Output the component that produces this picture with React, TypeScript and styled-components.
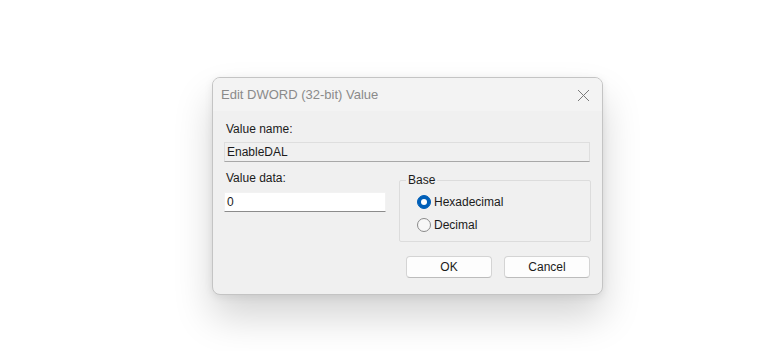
import styled, { createGlobalStyle } from 'styled-components';

const GlobalStyle = createGlobalStyle`
  html, body {
    margin: 0;
    padding: 0;
    background: #ffffff;
  }
  body {
    font-family: "Liberation Sans", Arial, sans-serif;
    color: #1b1b1b;
  }
`;

const Page = styled.div`
  width: 768px;
  height: 351px;
  padding: 77px 0 0 212px;
  box-sizing: border-box;
  overflow: hidden;
`;

const Dialog = styled.div`
  width: 391px;
  box-sizing: border-box;
  background: #f0f0f0;
  border: 1px solid #c4c4c4;
  border-radius: 8px;
  box-shadow: 0 22px 38px rgba(0, 0, 0, 0.17), 0 2px 8px rgba(0, 0, 0, 0.08);
  overflow: hidden;
`;

const TitleBar = styled.div`
  height: 33px;
  display: flex;
  align-items: center;
  justify-content: space-between;
  padding: 0 12px 0 8px;
  background: #f3f3f3;
`;

const Title = styled.span`
  font-size: 13px;
  color: #8a8a8a;
`;

const CloseIcon = styled.svg`
  width: 13px;
  height: 13px;
  margin-top: 1px;
`;

const Body = styled.div`
  padding: 0 11px 16px 11px;
`;

const Label = styled.div`
  font-size: 12px;
  line-height: 14px;
  margin: ${(p: { $top: number }) => p.$top}px 0 0 2px;
`;

const TextBox = styled.div<{ $width: number; $white?: boolean; $top: number }>`
  width: ${(p) => p.$width}px;
  height: 20px;
  margin-top: ${(p) => p.$top}px;
  box-sizing: border-box;
  background: ${(p) => (p.$white ? '#ffffff' : '#f0f0f0')};
  border: 1px solid ${(p) => (p.$white ? '#f2f2f2' : '#dedede')};
  border-bottom-color: ${(p) => (p.$white ? '#8c8c8c' : '#a8a8a8')};
  font-size: 12px;
  line-height: 18px;
  padding-left: 2px;
  display: flex;
  align-items: center;
`;

const DataRow = styled.div`
  display: grid;
  grid-template-columns: 162px 192px;
  column-gap: 13px;
  align-items: start;
`;

const DataColumn = styled.div`
  display: flex;
  flex-direction: column;
`;

const GroupBox = styled.fieldset`
  margin: 11px 0 0 0;
  padding: 8px 0 7px 6px;
  height: 69px;
  box-sizing: border-box;
  border: 1px solid #dcdcdc;
  border-radius: 2px;
  display: flex;
  flex-direction: column;
  gap: 9px;
  min-width: 0;
`;

const Legend = styled.legend`
  font-size: 12px;
  line-height: 14px;
  padding: 0 2px;
  margin-left: 0;
`;

const RadioRow = styled.div`
  display: flex;
  align-items: center;
  gap: 3px;
  margin-left: 11px;
  font-size: 12px;
  line-height: 14px;
`;

const RadioCircle = styled.span<{ $checked?: boolean }>`
  width: 14px;
  height: 14px;
  box-sizing: border-box;
  border-radius: 50%;
  display: inline-flex;
  align-items: center;
  justify-content: center;
  background: ${(p) => (p.$checked ? '#005fb8' : '#f7f7f7')};
  border: 1px solid ${(p) => (p.$checked ? '#005fb8' : '#8a8a8a')};

  &::after {
    content: '';
    display: ${(p) => (p.$checked ? 'block' : 'none')};
    width: 6px;
    height: 6px;
    border-radius: 50%;
    background: #ffffff;
  }
`;

const ButtonRow = styled.div`
  display: flex;
  justify-content: flex-end;
  gap: 12px;
  margin-top: 14px;
  padding-right: 1px;
`;

const Button = styled.button`
  width: 86px;
  height: 22px;
  box-sizing: border-box;
  background: #fdfdfd;
  border: 1px solid #d4d4d4;
  border-bottom-color: #bcbcbc;
  border-radius: 4px;
  font-family: "Liberation Sans", Arial, sans-serif;
  font-size: 12px;
  color: #1b1b1b;
  padding: 0;
`;

export default function App() {
  return (
    <Page>
      <GlobalStyle />
      <Dialog>
        <TitleBar>
          <Title>Edit DWORD (32-bit) Value</Title>
          <CloseIcon viewBox="0 0 13 13">
            <path d="M1 1 L12 12 M12 1 L1 12" stroke="#7a7a7a" strokeWidth="1" fill="none" />
          </CloseIcon>
        </TitleBar>
        <Body>
          <Label $top={11}>Value name:</Label>
          <TextBox $width={366} $top={6}>EnableDAL</TextBox>
          <DataRow>
            <DataColumn>
              <Label $top={9}>Value data:</Label>
              <TextBox $width={162} $top={7} $white>0</TextBox>
            </DataColumn>
            <GroupBox>
              <Legend>Base</Legend>
              <RadioRow>
                <RadioCircle $checked />
                Hexadecimal
              </RadioRow>
              <RadioRow>
                <RadioCircle />
                Decimal
              </RadioRow>
            </GroupBox>
          </DataRow>
          <ButtonRow>
            <Button>OK</Button>
            <Button>Cancel</Button>
          </ButtonRow>
        </Body>
      </Dialog>
    </Page>
  );
}
